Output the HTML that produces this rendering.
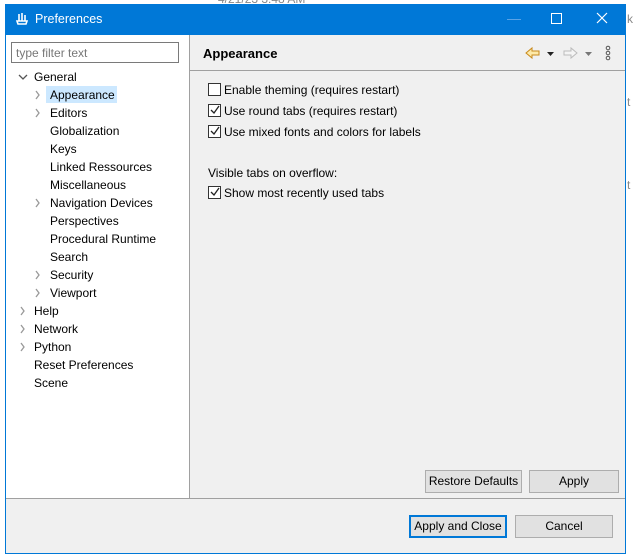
<!DOCTYPE html>
<html><head><style>
*{box-sizing:border-box}
body{margin:0;width:633px;height:542px;background:#fff;position:relative;overflow:hidden;font-family:"Liberation Sans","Noto Sans CJK KR",sans-serif;font-size:12px;color:#000}
.a{position:absolute}
.win{left:5px;top:4px;width:621px;height:550px;border:1px solid #0078d7;background:#f0f0f0}
.title{left:5px;top:4px;width:621px;height:31px;background:#0078d7;color:#fff}
.tree div{position:absolute;white-space:nowrap;font-size:12px}
.tree svg{position:absolute}
.cb{position:absolute;width:13px;height:13px;border:1px solid #333;background:#fff}
.btn{position:absolute;height:23px;border:1px solid #adadad;background:#e1e1e1;text-align:center;line-height:21px;font-size:12px}
.lbl{position:absolute;font-size:12px;white-space:nowrap}
</style></head><body>
<div class="a" style="left:218px;top:-8px;color:#888;font-size:12px">4/21/23 3:48 AM</div>
<div class="a" style="left:627px;top:12px;color:#888;font-size:12px">k</div>
<div class="a" style="left:627px;top:95px;color:#888;font-size:12px">t</div>
<div class="a" style="left:627px;top:178px;color:#888;font-size:12px">t</div>
<div class="a win"></div>
<div class="a title">
 <svg class="a" style="left:10px;top:8px" width="14" height="14" viewBox="0 0 14 14"><path d="M4 2v7M7 1v8M10 3v6M2 9h10l-1 3H3z" stroke="#fff" stroke-width="1.6" fill="none"/></svg>
 <div class="a" style="left:30px;top:8px;font-size:12.5px">Preferences</div>
 <div class="a" style="left:502px;top:15px;width:14px;height:1px;background:#5aa3e6"></div>
 <div class="a" style="left:546px;top:9px;width:11px;height:11px;border:1px solid #fff"></div>
 <svg class="a" style="left:591px;top:8px" width="12" height="12"><path d="M1 1L11 11M11 1L1 11" stroke="#fff" stroke-width="1.2"/></svg>
</div>
<div class="a" style="left:6px;top:35px;width:183px;height:463px;background:#fff"></div>
<div class="a" style="left:189px;top:35px;width:1px;height:464px;background:#a0a0a0"></div>
<div class="a" style="left:6px;top:498px;width:619px;height:1px;background:#a0a0a0"></div>
<div class="a" style="left:11px;top:42px;width:168px;height:21px;border:1px solid #7a7a7a;background:#fff;color:#777;font-size:12px;padding:3px 4px">type filter text</div>
<div class="tree">
<svg style="left:18px;top:73px" width="10" height="8"><path d="M1 2l4 4 4-4" stroke="#555" stroke-width="1.3" fill="none"/></svg>
<div style="left:34px;top:70px">General</div>
<div class="a" style="left:46px;top:86px;width:71px;height:17px;background:#cce8ff"></div>
<div style="left:50px;top:88px">Appearance</div>
<div style="left:50px;top:106px">Editors</div>
<div style="left:50px;top:124px">Globalization</div>
<div style="left:50px;top:142px">Keys</div>
<div style="left:50px;top:160px">Linked Ressources</div>
<div style="left:50px;top:178px">Miscellaneous</div>
<div style="left:50px;top:196px">Navigation Devices</div>
<div style="left:50px;top:214px">Perspectives</div>
<div style="left:50px;top:232px">Procedural Runtime</div>
<div style="left:50px;top:250px">Search</div>
<div style="left:50px;top:268px">Security</div>
<div style="left:50px;top:286px">Viewport</div>
<div style="left:34px;top:304px">Help</div>
<div style="left:34px;top:322px">Network</div>
<div style="left:34px;top:340px">Python</div>
<div style="left:34px;top:358px">Reset Preferences</div>
<div style="left:34px;top:376px">Scene</div>
<svg style="left:0;top:0" width="40" height="360">
<g stroke="#999" stroke-width="1.3" fill="none">
<path d="M36 91l3 4-3 4"/><path d="M36 109l3 4-3 4"/><path d="M36 199l3 4-3 4"/><path d="M36 271l3 4-3 4"/><path d="M36 289l3 4-3 4"/>
<path d="M21 307l3 4-3 4"/><path d="M21 325l3 4-3 4"/><path d="M21 343l3 4-3 4"/>
</g></svg>
</div>
<div class="lbl" style="left:203px;top:46px;font-weight:bold;font-size:13px">Appearance</div>
<svg class="a" style="left:524px;top:45px" width="100" height="16" viewBox="0 0 100 16">
<path d="M2 8L8 3v3h7v4H8v3z" fill="#fde9a8" stroke="#c8891a"/>
<path d="M23 7h7l-3.5 4z" fill="#222"/>
<path d="M53 8L47 3v3h-7v4h7v3z" fill="#f4f4f4" stroke="#bbb"/>
<path d="M61 7h7l-3.5 4z" fill="#777"/>
<circle cx="84" cy="3" r="1.8" fill="none" stroke="#555"/><circle cx="84" cy="8" r="1.8" fill="none" stroke="#555"/><circle cx="84" cy="13" r="1.8" fill="none" stroke="#555"/>
</svg>
<div class="a" style="left:190px;top:70px;width:435px;height:1px;background:#a0a0a0"></div>
<div class="cb" style="left:208px;top:83px"></div><div class="lbl" style="left:224px;top:83px">Enable theming (requires restart)</div>
<div class="cb" style="left:208px;top:104px"></div><div class="lbl" style="left:224px;top:104px">Use round tabs (requires restart)</div>
<div class="cb" style="left:208px;top:125px"></div><div class="lbl" style="left:224px;top:125px">Use mixed fonts and colors for labels</div>
<div class="lbl" style="left:208px;top:166px">Visible tabs on overflow:</div>
<div class="cb" style="left:208px;top:186px"></div><div class="lbl" style="left:224px;top:186px">Show most recently used tabs</div>
<svg class="a" style="left:208px;top:104px" width="13" height="100"><g stroke="#222" stroke-width="1.3" fill="none"><path d="M3 6l3 3 5-7"/><path d="M3 27l3 3 5-7"/><path d="M3 88l3 3 5-7"/></g></svg>
<div class="btn" style="left:425px;top:470px;width:97px">Restore Defaults</div>
<div class="btn" style="left:529px;top:470px;width:90px">Apply</div>
<div class="btn" style="left:409px;top:515px;width:98px;border:2px solid #0078d7;line-height:19px">Apply and Close</div>
<div class="btn" style="left:515px;top:515px;width:98px">Cancel</div>
</body></html>
